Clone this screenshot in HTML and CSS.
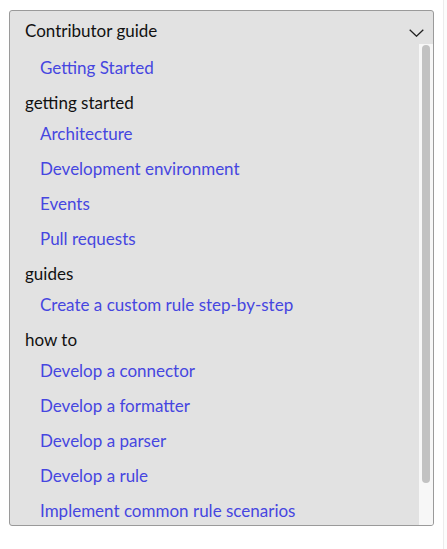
FILE: index.html
```html
<!DOCTYPE html>
<html lang="en">
<head>
    <meta charset="UTF-8">
    <title>Contributor guide</title>
    <link rel="stylesheet" href="styles.css">
</head>
<body>
    <div class="page">
        <nav class="guide">
            <div class="guide-head">
                <span class="guide-title">Contributor guide</span>
                <svg class="chevron" width="15" height="8" viewBox="0 0 15 8">
                    <path d="M0.7 0.7 L7.5 7.2 L14.3 0.7" fill="none" stroke="#222" stroke-width="1.3"/>
                </svg>
            </div>
            <div class="guide-body">
                <ul class="guide-list">
                    <li><a href="#">Getting Started</a></li>
                    <li class="group">getting started</li>
                    <li><a href="#">Architecture</a></li>
                    <li><a href="#">Development environment</a></li>
                    <li><a href="#">Events</a></li>
                    <li><a href="#">Pull requests</a></li>
                    <li class="group">guides</li>
                    <li><a href="#">Create a custom rule step-by-step</a></li>
                    <li class="group">how to</li>
                    <li><a href="#">Develop a connector</a></li>
                    <li><a href="#">Develop a formatter</a></li>
                    <li><a href="#">Develop a parser</a></li>
                    <li><a href="#">Develop a rule</a></li>
                    <li><a href="#">Implement common rule scenarios</a></li>
                </ul>
                <div class="scrollbar"><div class="thumb"></div></div>
            </div>
        </nav>
        <div class="page-rail"></div>
    </div>
</body>
</html>
```

FILE: styles.css
```css
html, body {
    margin: 0;
    padding: 0;
    background: #ffffff;
}
.page {
    display: flex;
    height: 549px;
    font-family: Lato, "Open Sans", sans-serif;
}
.guide {
    margin: 10px 0 0 9px;
    width: 425px;
    height: 516px;
    box-sizing: border-box;
    border: 1px solid #9a9a9a;
    border-radius: 3px;
    background: #e2e2e2;
    display: flex;
    flex-direction: column;
    overflow: hidden;
}
.guide-head {
    display: flex;
    align-items: center;
    justify-content: space-between;
    padding: 6px 9px 0 15px;
    height: 27px;
}
.guide-title {
    font-size: 17px;
    line-height: 24px;
    color: #111;
}
.chevron {
    display: block;
    margin-top: 4px;
}
.guide-body {
    flex: 1;
    display: flex;
    min-height: 0;
}
.guide-list {
    flex: 1;
    list-style: none;
    margin: 0;
    padding: 6px 0 0 15px;
    font-size: 17px;
}
.guide-list li {
    height: 35px;
    line-height: 35px;
    padding-left: 15px;
    white-space: nowrap;
}
.guide-list li.group {
    height: 31px;
    padding-left: 0;
    color: #111;
}
.guide-list a {
    color: #4646e0;
    text-decoration: none;
}
.scrollbar {
    width: 14px;
    background: #f7f7f7;
    display: flex;
    justify-content: center;
    padding-top: 1px;
}
.thumb {
    width: 8px;
    height: 438px;
    border-radius: 4px;
    background: #c2c2c2;
}
.page-rail {
    margin-left: auto;
    width: 3px;
    border-left: 1px solid #ececec;
    background: #fcfcfc;
}
```
